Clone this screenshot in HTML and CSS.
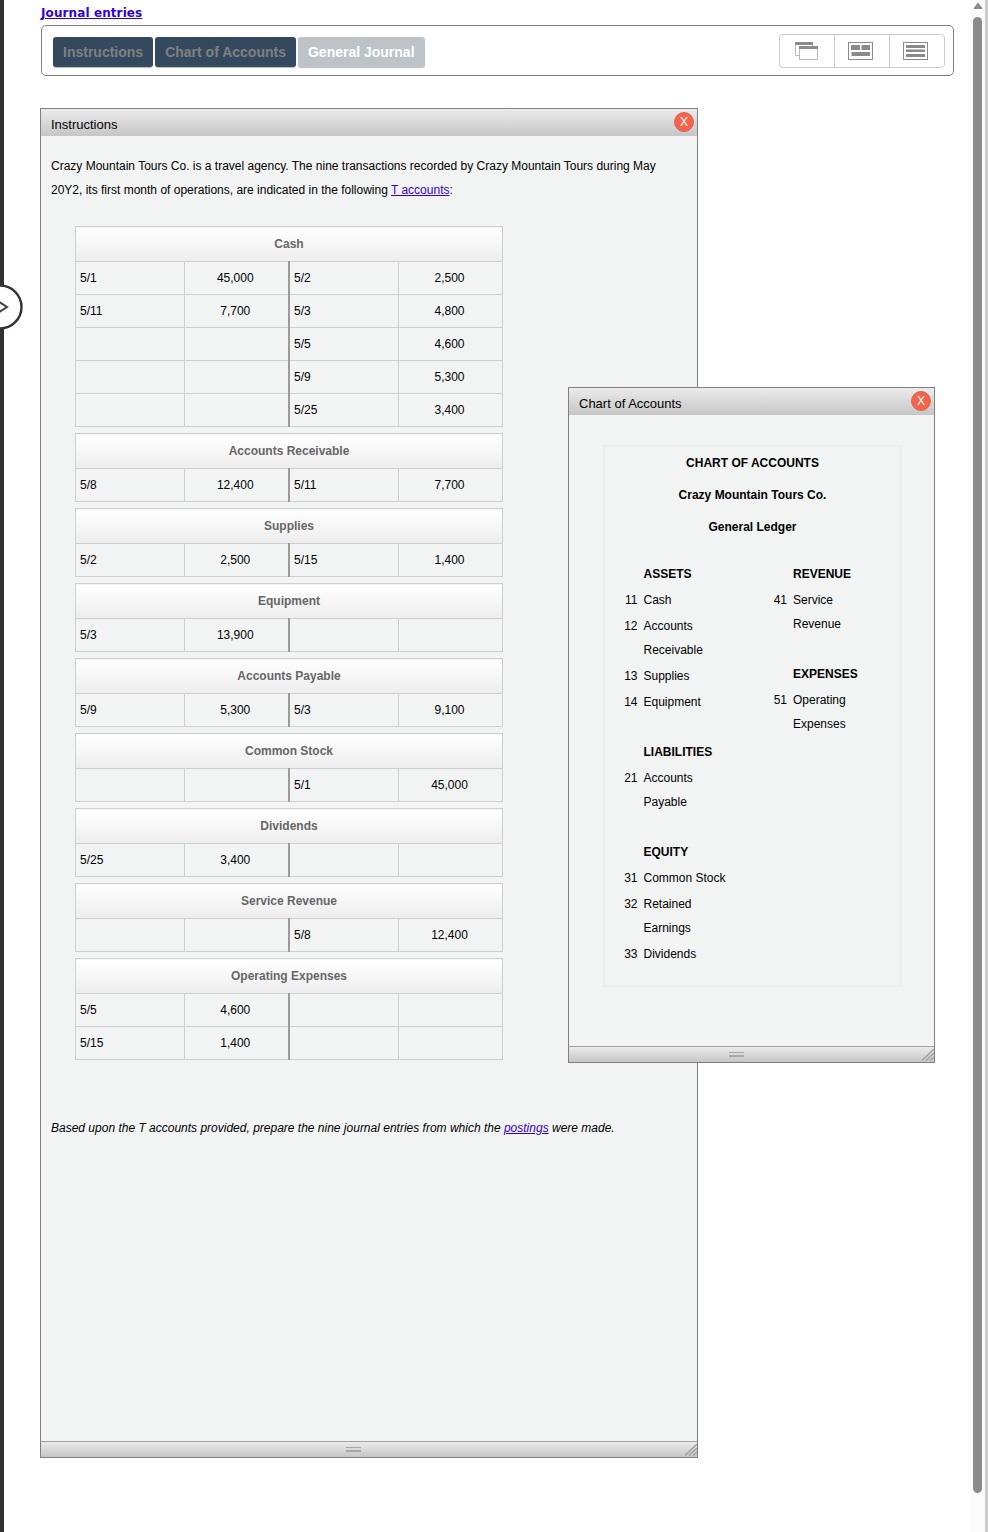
FILE: index.html
```
<!DOCTYPE html>
<html lang="en">
<head>
    <meta charset="UTF-8">
    <meta name="viewport" content="width=device-width, initial-scale=1.0">
    <title>Journal entries</title>
    <link rel="stylesheet" href="styles.css">
</head>
<body>
    <div class="side-bar"></div>
    <div class="drawer-toggle">
        <svg width="46" height="46" viewBox="0 0 46 46">
            <circle cx="23" cy="23" r="21.5" fill="#fff" stroke="#333" stroke-width="2.4"/>
            <path d="M20 16.500 L30 23 L20 29.500" fill="none" stroke="#444" stroke-width="2"/>
        </svg>
    </div>

    <main class="content">
        <a class="page-link" href="#">Journal entries</a>
        <div class="toolbar">
            <div class="tabs">
                <button class="tab">Instructions</button>
                <button class="tab">Chart of Accounts</button>
                <button class="tab tab-open">General Journal</button>
            </div>
            <div class="layouts">
                <button class="layout">
                    <svg width="26" height="20" viewBox="0 0 26 20">
                        <path d="M1.500 3v11.500H6M18.500 3v2" fill="none" stroke="#bbb"/>
                        <rect x="1" y="1" width="18" height="3" fill="#8a8a8a"/>
                        <path d="M5.500 6v12.500h18V6" fill="#fff" stroke="#bbb"/>
                        <rect x="5" y="5" width="19" height="3" fill="#8a8a8a"/>
                    </svg>
                </button>
                <button class="layout">
                    <svg width="26" height="20" viewBox="0 0 26 20">
                        <rect x="0.500" y="1.500" width="24" height="17" fill="#fff" stroke="#8a8a8a"/>
                        <path d="M3 4h9v5H3zM13.500 4H22v5h-8.500zM3.500 11H22v4H3.500z" fill="#8a8a8a"/>
                    </svg>
                </button>
                <button class="layout">
                    <svg width="26" height="20" viewBox="0 0 26 20">
                        <rect x="0.500" y="1.500" width="24" height="17" fill="#fff" stroke="#8a8a8a"/>
                        <path d="M3 4h19v3H3zM3 8.500h19v2.500H3zM3 13h19v3H3z" fill="#8a8a8a"/>
                    </svg>
                </button>
            </div>
        </div>
    </main>

    <section class="window instructions">
        <div class="window-title">Instructions<span class="close">X</span></div>
        <div class="window-body">
            <p class="intro">Crazy Mountain Tours Co. is a travel agency. The nine transactions recorded by Crazy Mountain Tours during May<br>20Y2, its first month of operations, are indicated in the following <a href="#">T accounts</a>:</p>
            <div id="tAccounts"></div>
            <p class="task">Based upon the T accounts provided, prepare the nine journal entries from which the <a href="#">postings</a> were made.</p>
        </div>
        <div class="window-foot">
            <span class="grip"></span>
            <svg class="corner" width="13" height="12" viewBox="0 0 13 12"><path d="M1 11.500L13 0M5 11.500L13 4M9 11.500L13 8" stroke="#a0a0a0" stroke-width="1.400"/></svg>
        </div>
    </section>

    <section class="window chart">
        <div class="window-title">Chart of Accounts<span class="close">X</span></div>
        <div class="window-body">
            <div class="chart-box">
                <h4>CHART OF ACCOUNTS</h4>
                <h4>Crazy Mountain Tours Co.</h4>
                <h4>General Ledger</h4>
                <div class="chart-cols">
                    <div class="chart-col">
                        <dl>
                            <dt></dt><dd class="group">ASSETS</dd>
                            <dt>11</dt><dd>Cash</dd>
                            <dt>12</dt><dd>Accounts<br>Receivable</dd>
                            <dt>13</dt><dd>Supplies</dd>
                            <dt>14</dt><dd>Equipment</dd>
                        </dl>
                        <dl>
                            <dt></dt><dd class="group">LIABILITIES</dd>
                            <dt>21</dt><dd>Accounts<br>Payable</dd>
                        </dl>
                        <dl>
                            <dt></dt><dd class="group">EQUITY</dd>
                            <dt>31</dt><dd>Common Stock</dd>
                            <dt>32</dt><dd>Retained<br>Earnings</dd>
                            <dt>33</dt><dd>Dividends</dd>
                        </dl>
                    </div>
                    <div class="chart-col">
                        <dl>
                            <dt></dt><dd class="group">REVENUE</dd>
                            <dt>41</dt><dd>Service<br>Revenue</dd>
                        </dl>
                        <dl>
                            <dt></dt><dd class="group">EXPENSES</dd>
                            <dt>51</dt><dd>Operating<br>Expenses</dd>
                        </dl>
                    </div>
                </div>
            </div>
        </div>
        <div class="window-foot">
            <span class="grip"></span>
            <svg class="corner" width="13" height="12" viewBox="0 0 13 12"><path d="M1 11.500L13 0M5 11.500L13 4M9 11.500L13 8" stroke="#a0a0a0" stroke-width="1.400"/></svg>
        </div>
    </section>

    <div class="scrollbar">
        <svg width="10" height="8" viewBox="0 0 10 8"><path d="M5 1L9 6.500H1z" fill="#8b8b8b" stroke="#8b8b8b" stroke-linejoin="round"/></svg>
        <div class="thumb"></div>
    </div>

    <script>
        const accounts = [
            ['Cash', [
                ['5/1', '45,000', '5/2', '2,500'],
                ['5/11', '7,700', '5/3', '4,800'],
                ['', '', '5/5', '4,600'],
                ['', '', '5/9', '5,300'],
                ['', '', '5/25', '3,400']
            ]],
            ['Accounts Receivable', [['5/8', '12,400', '5/11', '7,700']]],
            ['Supplies', [['5/2', '2,500', '5/15', '1,400']]],
            ['Equipment', [['5/3', '13,900', '', '']]],
            ['Accounts Payable', [['5/9', '5,300', '5/3', '9,100']]],
            ['Common Stock', [['', '', '5/1', '45,000']]],
            ['Dividends', [['5/25', '3,400', '', '']]],
            ['Service Revenue', [['', '', '5/8', '12,400']]],
            ['Operating Expenses', [
                ['5/5', '4,600', '', ''],
                ['5/15', '1,400', '', '']
            ]]
        ];

        const holder = document.getElementById('tAccounts');
        accounts.forEach(([name, rows]) => {
            const table = document.createElement('table');
            table.className = 't-account';
            table.innerHTML = `<colgroup><col class="debit-date"><col class="amount"><col class="credit-date"><col class="amount"></colgroup><tr><th colspan="4">${name}</th></tr>`;
            rows.forEach(cells => {
                const row = table.insertRow();
                cells.forEach(text => {
                    row.insertCell().textContent = text;
                });
            });
            holder.appendChild(table);
        });
    </script>
</body>
</html>
```
FILE: styles.css
```
* {
    box-sizing: border-box;
}
body {
    margin: 0;
    height: 1532px;
    display: flex;
    position: relative;
    overflow: hidden;
    background-color: #fff;
    font-family: "Liberation Sans", Arial, sans-serif;
    font-size: 12px;
    color: #000;
}
a {
    color: #30d;
}
.side-bar {
    width: 4px;
    background-color: #333130;
}
.drawer-toggle {
    position: absolute;
    left: -23px;
    top: 284px;
}
.drawer-toggle svg {
    display: block;
}
.content {
    flex: 1;
    padding: 4px 16px 0 37px;
}
.page-link {
    display: block;
    height: 21px;
    line-height: 18px;
    font-family: "DejaVu Sans", Verdana, sans-serif;
    font-size: 12px;
    font-weight: bold;
    letter-spacing: 0.1px;
}
.toolbar {
    display: flex;
    justify-content: space-between;
    align-items: flex-start;
    height: 51px;
    padding: 8px 8px 0 11px;
    border: 1px solid #808080;
    border-radius: 5px;
}
.tabs {
    display: flex;
    gap: 2px;
    padding-top: 3px;
}
.tab {
    height: 30px;
    padding: 0 10px;
    border: none;
    border-radius: 3px;
    background-color: #34495e;
    box-shadow: 0 1px 1px #bbb;
    font-family: inherit;
    font-size: 14px;
    font-weight: bold;
    color: #808080;
}
.tab-open {
    background-color: #bdc3c7;
    color: #fff;
}
.layouts {
    display: flex;
    border: 1px solid #ccc;
    border-radius: 4px;
}
.layout {
    display: flex;
    align-items: center;
    width: 55px;
    height: 32px;
    padding: 0 0 0 13px;
    border: none;
    border-right: 1px solid #ccc;
    background: none;
}
.layout:first-child {
    padding-left: 14px;
}
.layout:last-child {
    width: 54px;
    border-right: none;
}

.window {
    position: absolute;
    display: flex;
    flex-direction: column;
    border: 1px solid #808080;
    background-color: #f2f4f4;
}
.instructions {
    left: 40px;
    top: 108px;
    width: 658px;
    height: 1350px;
}
.chart {
    left: 568px;
    top: 387px;
    width: 367px;
    height: 676px;
}
.window-title {
    display: flex;
    justify-content: space-between;
    height: 27px;
    padding: 0 3px 0 10px;
    line-height: 31px;
    font-size: 13px;
    background: linear-gradient(#ebebeb, #c6c6c6);
}
.close {
    width: 20px;
    height: 20px;
    margin-top: 3px;
    border: 1px solid #d9655a;
    border-radius: 50%;
    background-color: #f5634a;
    font-family: "Noto Sans", sans-serif;
    line-height: 17px;
    text-align: center;
    color: #fff;
}
.window-body {
    flex: 1;
}
.window-foot {
    position: relative;
    display: flex;
    justify-content: center;
    height: 16px;
    border-top: 1px solid #a0a0a0;
    background: linear-gradient(#ebebeb, #c6c6c6);
}
.grip {
    width: 15px;
    height: 5px;
    margin: 5px 0 0 -31px;
    border-top: 1px solid #a8a8a8;
    border-bottom: 2px solid #a8a8a8;
}
.corner {
    position: absolute;
    right: 0;
    bottom: 1px;
}

.intro {
    margin: 18px 10px 24px;
    line-height: 24px;
}
.task {
    margin: 56px 10px 0;
    line-height: 24px;
    font-style: italic;
}
.t-account {
    width: 428px;
    margin: 0 0 6px 34px;
    border-collapse: collapse;
    table-layout: fixed;
}
.t-account .debit-date {
    width: 109px;
}
.t-account .credit-date {
    width: 110px;
}
.t-account .amount {
    width: 104px;
}
.t-account th {
    height: 35px;
    padding: 0;
    border: 1px solid #ccd0d3;
    background: linear-gradient(#fff, #ededed);
    color: #666;
}
.t-account td {
    height: 33px;
    padding: 0 4px;
    border: 1px solid #ccd0d3;
}
.t-account td:nth-child(even) {
    padding-right: 6px;
    text-align: center;
}
.t-account td:nth-child(2) {
    border-right: 2px solid #9d9a9b;
}
.t-account td:nth-child(3) {
    padding-left: 4.5px;
}

.chart-box {
    width: 299px;
    height: 542px;
    margin: 30px 0 0 34px;
    border: 2px solid #eee;
}
.chart-box h4 {
    margin: 0;
    line-height: 32px;
    font-size: 12px;
    text-align: center;
}
.chart-cols {
    display: flex;
    padding: 19px 0 0 8.5px;
}
.chart-col {
    flex: none;
    width: 149.5px;
}
.chart-col + .chart-col {
    width: 130px;
}
.chart-col dl {
    display: grid;
    grid-template-columns: 24px 1fr;
    column-gap: 6px;
    row-gap: 2px;
    margin: 0 0 26px;
    line-height: 24px;
}
.chart-col dt {
    text-align: right;
}
.chart-col dd {
    margin: 0;
}
.chart-col .group {
    font-weight: bold;
}

.scrollbar {
    display: flex;
    flex-direction: column;
    align-items: center;
    width: 18px;
    padding: 2px 0 0;
    border-right: 3px solid #c9c9c9;
    background-color: #fcfcfc;
}
.thumb {
    width: 9px;
    height: 1476px;
    margin-top: 7px;
    border-radius: 5px;
    background-color: #8b8b8b;
}
```
